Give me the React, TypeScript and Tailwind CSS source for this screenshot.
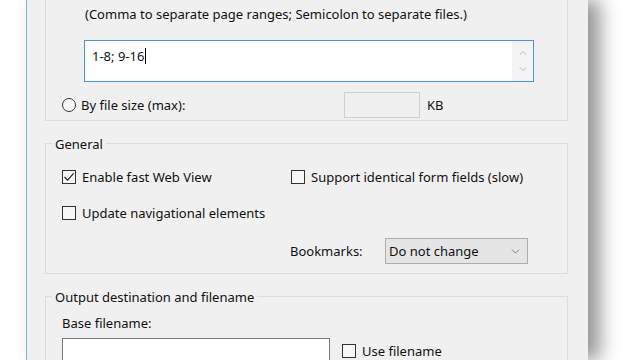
import { ChevronDown, ChevronUp } from 'lucide-react';

function CheckBox({ checked = false }: { checked?: boolean }) {
  return (
    <span className="w-[14px] h-[14px] border border-[#333] bg-[#f7f7f7] flex items-center justify-center shrink-0">
      {checked && (
        <svg width="12" height="12" viewBox="0 0 12 12">
          <path d="M1.5 6 L4.6 9.1 L10.6 2.4" fill="none" stroke="#222" strokeWidth="1.2" />
        </svg>
      )}
    </span>
  );
}

function Check({ label, checked }: { label: string; checked?: boolean }) {
  return (
    <label className="flex items-center gap-[6px] h-4">
      <CheckBox checked={checked} />
      <span>{label}</span>
    </label>
  );
}

function GroupLabel({ children }: { children: string }) {
  return (
    <div className="-mt-[8px] ml-[6px] px-[3px] w-fit bg-[#f0f0f0] leading-4">{children}</div>
  );
}

export default function App() {
  return (
    <div className="w-[640px] h-[360px] overflow-hidden bg-white font-['Noto_Sans',sans-serif] text-[13px] leading-4 text-[#111]">
      <div className="ml-[26px] w-[562px] h-[360px] bg-[#f0f0f0] border-l border-[#7fb0e0] shadow-[12px_0_18px_0_rgba(0,0,0,0.42)]">

        {/* Split by page ranges / file size */}
        <div className="ml-[18px] w-[523px] h-[121px] border-x border-b border-[#dcdcdc]">
          <p className="pt-[6px] pl-[39px]">(Comma to separate page ranges; Semicolon to separate files.)</p>
          <div className="ml-[38px] mt-[18px] w-[450px] h-[42px] border border-[#4d94db] bg-white flex">
            <div className="flex-1 pl-[7px] pt-[7px] flex items-start">
              <span>1-8; 9-16</span>
              <span className="w-px h-[16px] bg-black ml-px" />
            </div>
            <div className="w-[21px] bg-[#f4f4f4] flex flex-col items-center justify-between py-[6px]">
              <ChevronUp size={12} strokeWidth={1.5} color="#a8a8a8" />
              <ChevronDown size={12} strokeWidth={1.5} color="#a8a8a8" />
            </div>
          </div>
          <div className="mt-[10px] h-[26px] flex items-center">
            <div className="pl-[16px] w-[298px] flex items-center gap-[5px]">
              <span className="w-[14px] h-[14px] rounded-full border border-[#333] bg-[#f7f7f7] shrink-0" />
              <span>By file size (max):</span>
            </div>
            <div className="w-[76px] h-[26px] border border-[#cfcfcf] bg-[#f0f0f0]" />
            <span className="ml-[7px]">KB</span>
          </div>
        </div>

        {/* General */}
        <div className="ml-[18px] mt-[22px] w-[523px] h-[131px] border border-[#dcdcdc]">
          <GroupLabel>General</GroupLabel>
          <div className="pl-[16px] mt-[17px] flex">
            <div className="w-[229px]">
              <Check label="Enable fast Web View" checked />
            </div>
            <Check label="Support identical form fields (slow)" />
          </div>
          <div className="pl-[16px] mt-[20px]">
            <Check label="Update navigational elements" />
          </div>
          <div className="pl-[244px] mt-[17px] flex items-center">
            <span className="w-[95px]">Bookmarks:</span>
            <div className="w-[143px] h-[26px] border border-[#adadad] bg-[#e5e5e5] flex items-center justify-between pl-[3px] pr-[5px]">
              <span>Do not change</span>
              <ChevronDown size={13} strokeWidth={1.5} color="#666" />
            </div>
          </div>
        </div>

        {/* Output destination */}
        <div className="ml-[18px] mt-[22px] w-[523px] h-[80px] border border-[#dcdcdc]">
          <GroupLabel>Output destination and filename</GroupLabel>
          <p className="pl-[16px] mt-[10px]">Base filename:</p>
          <div className="pl-[16px] mt-[7px] flex items-center">
            <div className="w-[268px] h-[26px] border border-[#7a7a7a] bg-white" />
            <div className="ml-[12px]">
              <Check label="Use filename" />
            </div>
          </div>
        </div>
      </div>
    </div>
  );
}
